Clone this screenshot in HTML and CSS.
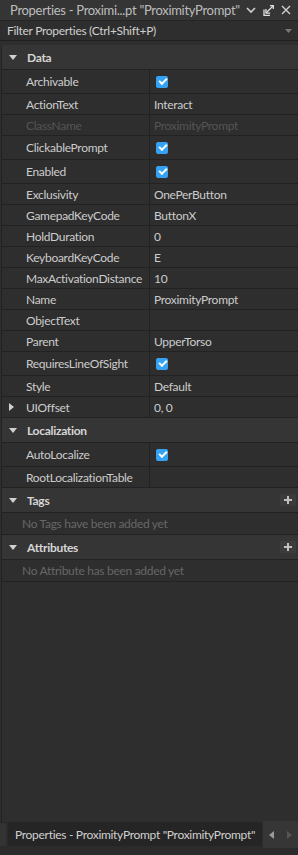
FILE: index.html
```html
<!DOCTYPE html>
<html lang="en">

<head>
	<meta charset="UTF-8">
	<meta name="viewport" content="width=device-width, initial-scale=1.0">
	<title>Properties</title>

	<link rel="stylesheet" href="styles.css">
</head>

<body>
	<div class="panel">
		<div class="titlebar">
			<span class="titlebar__text">Properties - Proximi...pt "ProximityPrompt"</span>
			<div class="titlebar__icons">
				<svg width="10" height="10" viewBox="0 0 10 10"><path d="M1 3l4 4 4-4" fill="none" stroke="#d0d0d0" stroke-width="1.6"/></svg>
				<svg width="11" height="11" viewBox="0 0 11 11"><path d="M1 4.5v6h6" fill="none" stroke="#e0e0e0" stroke-width="1.3"/><path d="M3.5 7.5L10 1" stroke="#e0e0e0" stroke-width="1.3"/><path d="M3 4v4.2h4.2" fill="none" stroke="#e0e0e0" stroke-width="1.3"/><path d="M7 0.7h3.3V4" fill="none" stroke="#e0e0e0" stroke-width="1.3"/></svg>
				<svg width="10" height="10" viewBox="0 0 10 10"><path d="M1 1l8 8M9 1l-8 8" stroke="#d0d0d0" stroke-width="1.4"/></svg>
			</div>
		</div>

		<div class="filter">
			<span>Filter Properties (Ctrl+Shift+P)</span>
			<svg width="7" height="4" viewBox="0 0 7 4"><path d="M0 0h7L3.5 4z" fill="#777"/></svg>
		</div>

		<div class="props">
			<div class="header">
				<span class="arrow-down"></span>
				<span>Data</span>
			</div>
			<div class="row tall"><span class="name">Archivable</span><span class="value"><span class="check"></span></span></div>
			<div class="row"><span class="name">ActionText</span><span class="value">Interact</span></div>
			<div class="row disabled"><span class="name">ClassName</span><span class="value">ProximityPrompt</span></div>
			<div class="row tall"><span class="name">ClickablePrompt</span><span class="value"><span class="check"></span></span></div>
			<div class="row tall"><span class="name">Enabled</span><span class="value"><span class="check"></span></span></div>
			<div class="row"><span class="name">Exclusivity</span><span class="value">OnePerButton</span></div>
			<div class="row"><span class="name">GamepadKeyCode</span><span class="value">ButtonX</span></div>
			<div class="row"><span class="name">HoldDuration</span><span class="value">0</span></div>
			<div class="row"><span class="name">KeyboardKeyCode</span><span class="value">E</span></div>
			<div class="row"><span class="name">MaxActivationDistance</span><span class="value">10</span></div>
			<div class="row"><span class="name">Name</span><span class="value">ProximityPrompt</span></div>
			<div class="row"><span class="name">ObjectText</span><span class="value"></span></div>
			<div class="row"><span class="name">Parent</span><span class="value">UpperTorso</span></div>
			<div class="row tall"><span class="name">RequiresLineOfSight</span><span class="value"><span class="check"></span></span></div>
			<div class="row"><span class="name">Style</span><span class="value">Default</span></div>
			<div class="row"><span class="name"><span class="arrow-right"></span>UIOffset</span><span class="value">0, 0</span></div>

			<div class="header">
				<span class="arrow-down"></span>
				<span>Localization</span>
			</div>
			<div class="row tall"><span class="name">AutoLocalize</span><span class="value"><span class="check"></span></span></div>
			<div class="row"><span class="name">RootLocalizationTable</span><span class="value"></span></div>

			<div class="header">
				<span class="arrow-down"></span>
				<span>Tags</span>
				<span class="plus"></span>
			</div>
			<div class="empty">No Tags have been added yet</div>

			<div class="header">
				<span class="arrow-down"></span>
				<span>Attributes</span>
				<span class="plus"></span>
			</div>
			<div class="empty">No Attribute has been added yet</div>
		</div>
	</div>

	<div class="tabbar">
		<span class="tabbar__grip"></span>
		<span class="tab">Properties - ProximityPrompt "ProximityPrompt"</span>
		<div class="tabbar__arrows">
			<svg width="6" height="8" viewBox="0 0 6 8"><path d="M5 0v8L0 4z" fill="#9a9a9a"/></svg>
			<svg width="6" height="8" viewBox="0 0 6 8"><path d="M1 0v8l5-4z" fill="#555"/></svg>
		</div>
	</div>
</body>

</html>
```

FILE: styles.css
```css
body {
	font-family: Lato, "Open Sans", sans-serif;
	font-size: 12px;
	letter-spacing: -0.3px;
	margin: 0;
	padding: 0;
	height: 855px;
	background-color: #2b2b2b;
	color: #cccccc;
	display: flex;
	flex-direction: column;
	overflow: hidden;
}

.panel {
	height: 822px;
	display: flex;
	flex-direction: column;
	background-color: #2e2e2e;
}

.titlebar {
	height: 20px;
	display: flex;
	align-items: center;
	justify-content: space-between;
	background-color: #353535;
	padding: 0 7px 0 10px;
	font-size: 13px;
	letter-spacing: -0.3px;
	color: #bdbdbd;
}

.titlebar__text {
	white-space: nowrap;
}

.titlebar__icons {
	display: flex;
	align-items: center;
	gap: 7px;
}

.filter {
	height: 19px;
	display: flex;
	align-items: center;
	justify-content: space-between;
	padding: 0 6px 0 7px;
	border-top: 1px solid #252525;
	border-bottom: 1px solid #1f1f1f;
	color: #cfcfcf;
}

.props {
	flex: 1;
	margin-top: 4px;
	margin-left: 1px;
	border-left: 1px solid #222;
}

.header {
	height: 24px;
	display: flex;
	align-items: center;
	background-color: #353535;
	border-bottom: 1px solid #222;
	font-weight: bold;
	color: #d6d6d6;
}

.arrow-down {
	width: 0;
	height: 0;
	margin: 0 10px 0 7px;
	border-left: 4px solid transparent;
	border-right: 4px solid transparent;
	border-top: 5px solid #d0d0d0;
}

.arrow-right {
	position: absolute;
	left: 7px;
	width: 0;
	height: 0;
	border-top: 4px solid transparent;
	border-bottom: 4px solid transparent;
	border-left: 5px solid #d0d0d0;
}

.plus {
	margin-left: auto;
	margin-right: 2px;
	width: 16px;
	height: 12px;
	background-color: #3c3c3c;
	display: flex;
	align-items: center;
	justify-content: center;
}

.plus::before {
	content: "";
	width: 8px;
	height: 8px;
	background:
		linear-gradient(#c0c0c0, #c0c0c0) center / 8px 2px no-repeat,
		linear-gradient(#c0c0c0, #c0c0c0) center / 2px 8px no-repeat;
}

.row {
	height: 20px;
	display: flex;
	border-bottom: 1px solid #222;
}

.row.tall {
	height: 23px;
}

.name {
	position: relative;
	width: 123px;
	padding-left: 24px;
	border-right: 1px solid #222;
	display: flex;
	align-items: center;
	white-space: nowrap;
}

.value {
	flex: 1;
	padding-left: 4px;
	display: flex;
	align-items: center;
}

.disabled {
	color: #555;
}

.check {
	width: 12px;
	height: 12px;
	margin-left: 2px;
	border-radius: 2px;
	background-color: #35a3f4;
	position: relative;
}

.check::after {
	content: "";
	position: absolute;
	left: 3px;
	top: 2px;
	width: 6px;
	height: 3px;
	border-left: 2px solid #fff;
	border-bottom: 2px solid #fff;
	transform: rotate(-45deg);
}

.empty {
	height: 21px;
	display: flex;
	align-items: center;
	padding-left: 20px;
	border-bottom: 1px solid #222;
	color: #676767;
}

.tabbar {
	height: 23px;
	display: flex;
	align-items: center;
	border-top: 1px solid #262626;
}

.tabbar__grip {
	width: 6px;
	height: 100%;
	background-color: #333;
	margin-right: 2px;
}

.tab {
	height: 100%;
	display: flex;
	align-items: center;
	padding: 0 7px;
	background-color: #252525;
	color: #d0d0d0;
	white-space: nowrap;
}

.tabbar__arrows {
	flex: 1;
	height: 27px;
	display: flex;
	align-items: center;
	justify-content: space-around;
	background-color: #363636;
	margin-left: 1px;
}
```
